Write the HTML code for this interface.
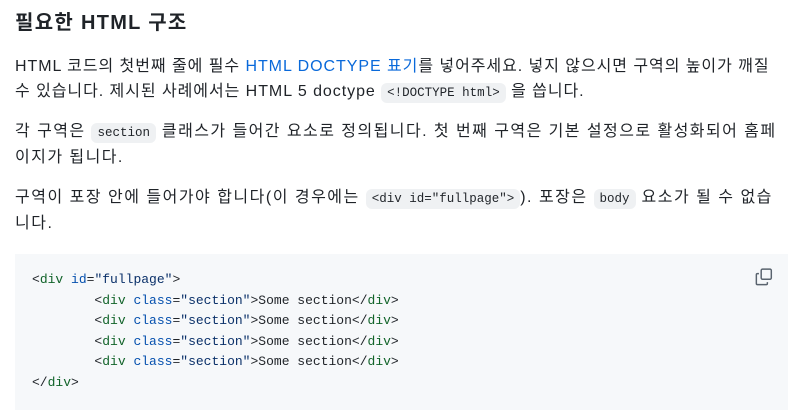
<!DOCTYPE html>
<html><head><meta charset="utf-8"><style>
body{margin:0;background:#fff;width:800px;height:417px;overflow:hidden;font-family:"Liberation Sans","Noto Sans CJK KR",sans-serif;color:#1f2328}
.w{position:absolute;left:15px;top:0;width:772px}
h2{font-size:20px;font-weight:600;margin:0;position:absolute;top:9px;line-height:28px;letter-spacing:1.3px}
p{font-size:16px;line-height:24.5px;margin:0;position:absolute;left:0;width:790px;white-space:nowrap;letter-spacing:0.95px}
a{color:#0969da;text-decoration:none}
code{font-family:"Liberation Mono",monospace;font-size:12.5px;background:#eff1f3;padding:3px 6px;border-radius:6px;letter-spacing:0}
pre{position:absolute;left:0;top:254px;width:773px;height:156px;margin:0;background:#f6f8fa;font-family:"Liberation Mono",monospace;font-size:13px;line-height:20.6px;padding:16px 0 0 17px;box-sizing:border-box;white-space:pre;color:#1f2328}
.t{color:#116329}.a{color:#0550ae}.s{color:#0a3069}
</style></head><body><div class="w">
<h2>필요한 HTML 구조</h2>
<p style="top:55px">HTML 코드의 첫번째 줄에 필수 <a>HTML DOCTYPE 표기</a>를 넣어주세요. 넣지 않으시면 구역의 높이가 깨질<br>수 있습니다. 제시된 사례에서는 HTML 5 doctype <code>&lt;!DOCTYPE html&gt;</code> 을 씁니다.</p>
<p style="top:120px;letter-spacing:1.45px">각 구역은 <code>section</code> 클래스가 들어간 요소로 정의됩니다. 첫 번째 구역은 기본 설정으로 활성화되어 홈페<br>이지가 됩니다.</p>
<p style="top:186px;letter-spacing:1.5px">구역이 포장 안에 들어가야 합니다(이 경우에는 <code>&lt;div id="fullpage"&gt;</code>). 포장은 <code>body</code> 요소가 될 수 없습<br>니다.</p>
<pre>&lt;<span class="t">div</span> <span class="a">id</span>=<span class="s">"fullpage"</span>&gt;
        &lt;<span class="t">div</span> <span class="a">class</span>=<span class="s">"section"</span>&gt;Some section&lt;/<span class="t">div</span>&gt;
        &lt;<span class="t">div</span> <span class="a">class</span>=<span class="s">"section"</span>&gt;Some section&lt;/<span class="t">div</span>&gt;
        &lt;<span class="t">div</span> <span class="a">class</span>=<span class="s">"section"</span>&gt;Some section&lt;/<span class="t">div</span>&gt;
        &lt;<span class="t">div</span> <span class="a">class</span>=<span class="s">"section"</span>&gt;Some section&lt;/<span class="t">div</span>&gt;
&lt;/<span class="t">div</span>&gt;</pre>
<svg style="position:absolute;left:740px;top:268px" width="18" height="18" viewBox="0 0 16 16" fill="none" stroke="#59636e" stroke-width="1.3"><rect x="5.5" y="1" width="9" height="9" rx="1.2"/><path d="M3.5 5H2.2a1 1 0 0 0-1 1v7.8a1 1 0 0 0 1 1H10a1 1 0 0 0 1-1V12.5"/></svg>
</div></body></html>
